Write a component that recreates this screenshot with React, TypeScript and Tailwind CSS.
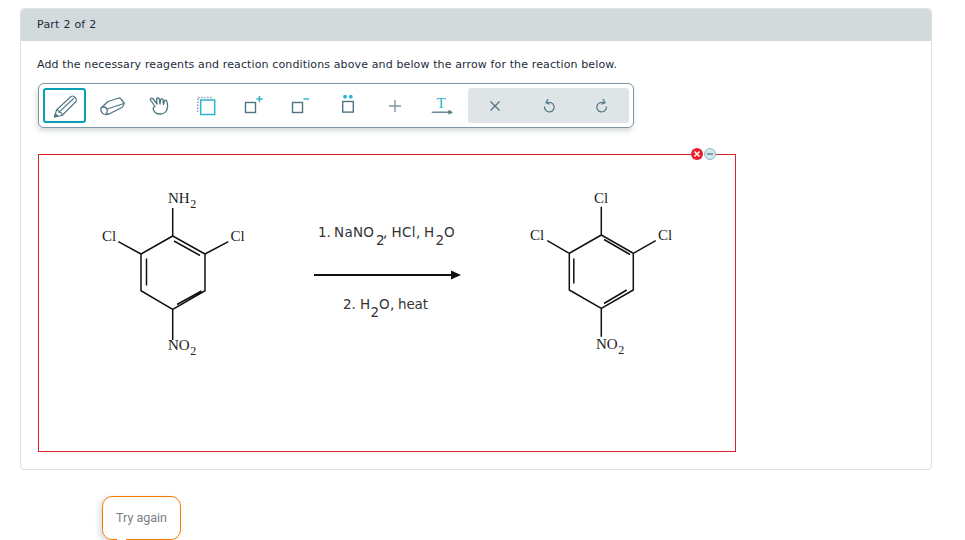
import React from "react";

const S = "#4f7584";
const A = "#2fb4d0";

function Tool({ className, children }: { className: string; children: React.ReactNode }) {
  return <div className={`flex h-full w-[46px] shrink-0 items-center justify-center ${className}`}>{children}</div>;
}

function Toolbar() {
  return (
    <div className="flex h-[45px] w-[596px] items-center rounded-[6px] border border-[#7d98a3] bg-white pl-[4px] shadow-[-1px_3px_5px_rgba(90,110,120,0.25)]">
      <div className="flex h-[35px] w-[43px] shrink-0 items-center justify-center rounded-[3px] border-2 border-[#0b9fb6]">
        <svg width="30" height="30" viewBox="0 0 30 30" fill="none" stroke={S} strokeWidth="1.1" strokeLinejoin="round" strokeLinecap="round">
          <path d="M4.5 26 L6.5 19 L21 5.5 Q22.5 4.5 24 5.5 L26 7.5 Q27 9 26 10.5 L12 24.5 Z" />
          <path d="M6.5 19 Q9 18.8 9.2 21.2 Q12 21.2 12 24.5" />
          <path d="M9.2 21.2 L23.5 7.5" />
          <path d="M4.5 26 L5.3 22.8 L7.8 25 Z" fill={S} />
        </svg>
      </div>
      <Tool className="ml-[3px]">
        <svg width="28" height="24" viewBox="0 0 28 24" fill="none" stroke={S} strokeWidth="1.3" strokeLinejoin="round" strokeLinecap="round">
          <path d="M3 14 L10 7.5 L21 4 Q22.5 4 23.5 5.5 L26 9 Q26.5 11.5 24 13.5 L11 20 Q8 20.8 5.5 20 Q2 17.5 3 14 Z" />
          <path d="M3.5 13.5 Q7.5 12 9 15 Q10 18 8 20.5" />
          <path d="M9 15 L26 9.5" />
        </svg>
      </Tool>
      <Tool className="">
        <svg width="24" height="24" viewBox="0 0 24 24" fill="none" stroke={S} strokeWidth="1.3" strokeLinejoin="round" strokeLinecap="round">
          <path d="M9 12.5 L4.2 5.5 Q5 3.2 6.8 4.5 L11 10 L10.5 5 Q12 3 13.3 5 L14 10 L14.6 5.5 Q16 4 17.2 5.8 L17.4 10.5 L18.6 6.5 Q20.3 5.5 20.8 7.3 Q22.5 13 20.5 16.5 Q18 20.3 14 20 Q9 20 7.5 16 Q6.5 13.5 9 12.5" />
        </svg>
      </Tool>
      <Tool className="ml-[1px]">
        <svg width="22" height="22" viewBox="0 0 22 22" fill="none">
          <path d="M3.7 17 V2.5 H18" stroke="#7f9aa6" strokeWidth="1.4" strokeDasharray="1.4 1.6" />
          <rect x="6.7" y="5" width="14" height="14.5" stroke={A} strokeWidth="1.5" />
        </svg>
      </Tool>
      <Tool className="">
        <svg width="24" height="22" viewBox="0 0 24 22" fill="none">
          <rect x="6.5" y="7.5" width="10" height="10" stroke={S} strokeWidth="1.4" />
          <path d="M17.5 4 H23.5 M20.5 1 V7" stroke={A} strokeWidth="1.5" />
        </svg>
      </Tool>
      <Tool className="">
        <svg width="24" height="22" viewBox="0 0 24 22" fill="none">
          <rect x="7.5" y="7.5" width="10" height="10" stroke={S} strokeWidth="1.4" />
          <path d="M18.5 4 H24" stroke={A} strokeWidth="1.5" />
        </svg>
      </Tool>
      <Tool className="ml-[5px]">
        <svg width="22" height="24" viewBox="0 0 22 24" fill="none">
          <rect x="5.7" y="7.5" width="10.6" height="10.6" stroke={S} strokeWidth="1.4" />
          <circle cx="8" cy="2.7" r="1.9" fill={A} />
          <circle cx="13.8" cy="2.7" r="1.9" fill={A} />
        </svg>
      </Tool>
      <Tool className="ml-[1px]">
        <svg width="16" height="16" viewBox="0 0 16 16" fill="none">
          <path d="M8 2 V14 M2 8 H14" stroke="#7f98a3" strokeWidth="1.4" />
        </svg>
      </Tool>
      <Tool className="">
        <svg width="26" height="24" viewBox="0 0 26 24" fill="none">
          <text x="13" y="14.2" textAnchor="middle" fontFamily="'Liberation Serif', serif" fontSize="15" fill={A} stroke="none">T</text>
          <path d="M3.7 18.2 H22" stroke={S} strokeWidth="1.3" />
          <path d="M20.5 15.7 L25 18.2 L20.5 20.7 Z" fill={S} />
        </svg>
      </Tool>
      <div className="ml-[4px] flex h-[35px] w-[161px] items-center rounded-[3px] bg-[#dfe5e7]">
        <div className="flex w-[54px] justify-center">
          <svg width="14" height="14" viewBox="0 0 14 14" fill="none">
            <path d="M2.5 2.5 L11.5 11.5 M11.5 2.5 L2.5 11.5" stroke={S} strokeWidth="1.3" />
          </svg>
        </div>
        <div className="flex w-[53px] justify-center">
          <svg width="14" height="16" viewBox="0 0 14 16" fill="none" stroke={S} strokeWidth="1.2">
            <path d="M5 5 A4.8 4.8 0 1 1 2.6 8.5" />
            <path d="M6 1 L4 4.8 L7.5 6.2" />
          </svg>
        </div>
        <div className="flex w-[54px] justify-center">
          <svg width="14" height="16" viewBox="0 0 14 16" fill="none" stroke={S} strokeWidth="1.2">
            <path d="M9 5 A4.8 4.8 0 1 0 11.4 8.5" />
            <path d="M8 1 L10 4.8 L6.5 6.2" />
          </svg>
        </div>
      </div>
    </div>
  );
}

function Label({ x, y, t, sub }: { x: number; y: number; t: string; sub?: string }) {
  return (
    <text x={x} y={y} fontFamily="'Liberation Serif', serif" fontSize="15" fill="#222">
      {t}
      {sub && <tspan dx="0.5" dy="5" fontSize="12">{sub}</tspan>}
    </text>
  );
}

function Drawing() {
  const bonds1 = "M172.7 208 V236 L205 254 V290.7 L172.7 309.3 L141 290.7 V254 L172.7 236 M172.7 309.3 V340 M141 254 L118.3 241.7 M205 254 L228.3 241.7 M146.5 258.5 V285.5 M174 241 L200 255.5 M177 304.5 L201.5 291";
  const bonds2 = "M601.3 206.7 V235 L633.3 253.3 V290 L601.3 308.3 L569.3 290 V253.3 L601.3 235 M601.3 308.3 V336.7 M569.3 253.3 L547.3 240.7 M633.3 253.3 L655.7 240.7 M573.8 258.5 V283.5 M604 239.5 L630 254.5 M604 303.5 L626.7 290";
  const rx = { fontFamily: "'DejaVu Sans', sans-serif", fontSize: 13.5, fill: "#333" };
  return (
    <svg className="block h-full w-full" viewBox="39 155 696 296" fill="none">
      <path d={bonds1} stroke="#111" strokeWidth="1.5" />
      <path d={bonds2} stroke="#111" strokeWidth="1.5" />
      <Label x={168} y={203} t="NH" sub="2" />
      <Label x={102} y={241} t="Cl" />
      <Label x={230.5} y={241} t="Cl" />
      <Label x={168} y={350} t="NO" sub="2" />
      <Label x={594} y={203} t="Cl" />
      <Label x={530} y={240} t="Cl" />
      <Label x={658} y={240} t="Cl" />
      <Label x={596} y={349} t="NO" sub="2" />
      <path d="M314 275 H452" stroke="#111" strokeWidth="1.8" />
      <path d="M451 270.5 L461 275 L451 279.5 Z" fill="#111" />
      <g {...rx}>
        <text x="318" y="237">1.</text>
        <text x="334" y="237" textLength="40" lengthAdjust="spacing">NaNO</text>
        <text x="376" y="245">2</text>
        <text x="383" y="237">,</text>
        <text x="391.5" y="237" textLength="24" lengthAdjust="spacing">HCl</text>
        <text x="416" y="237">,</text>
        <text x="424" y="237">H</text>
        <text x="435.5" y="245">2</text>
        <text x="444" y="237">O</text>
        <text x="343" y="309">2.</text>
        <text x="360" y="309">H</text>
        <text x="370.5" y="317">2</text>
        <text x="379" y="309">O</text>
        <text x="390" y="309">,</text>
        <text x="398" y="309" textLength="30" lengthAdjust="spacing">heat</text>
      </g>
    </svg>
  );
}

export default function App() {
  return (
    <div className="relative h-[540px] w-[965px] overflow-hidden bg-white font-['DejaVu_Sans',sans-serif] text-[#1d2b3a]">
      <div className="px-[20px] pt-[8px]">
        <div className="h-[462px] w-[912px] rounded-[4px] border border-[#dde2e4]">
          <div className="flex h-[32px] items-center rounded-t-[4px] bg-[#d3dadc] pl-[16px] text-[11px] tracking-[0.24px]">Part 2 of 2</div>
          <div className="pl-[17px] pt-[17px]">
            <p className="-ml-[1px] text-[11px] leading-[14px] tracking-[0.125px]">Add the necessary reagents and reaction conditions above and below the arrow for the reaction below.</p>
            <div className="mt-[11px]">
              <Toolbar />
            </div>
            <div className="relative mt-[26px] h-[298px] w-[698px] border border-[#d9222a]">
              <Drawing />
              <div className="absolute -top-[7px] right-[19px] flex items-center bg-white">
                <div className="flex h-[12px] w-[12px] items-center justify-center rounded-full bg-[#e8202a]">
                  <svg width="8" height="8" viewBox="0 0 8 8"><path d="M1.5 1.5 L6.5 6.5 M6.5 1.5 L1.5 6.5" stroke="#fff" strokeWidth="1.5" /></svg>
                </div>
                <div className="ml-px flex h-[12px] w-[12px] items-center justify-center rounded-full border border-[#8dbac6] bg-[#d5e6ea]">
                  <div className="h-[2px] w-[6px] bg-[#7d9ea9]" />
                </div>
              </div>
            </div>
          </div>
        </div>
        <div className="relative ml-[82px] mt-[26px] flex h-[44px] w-[79px] items-center justify-center rounded-[10px] border border-[#f57c00] font-['Roboto',sans-serif] text-[12.5px] text-[#7a7e83] shadow-[-3px_2px_5px_rgba(120,135,145,0.25)]">
          Try again
          <span className="absolute -bottom-px left-[14px] h-[2px] w-[9px] bg-white" />
        </div>
      </div>
    </div>
  );
}
